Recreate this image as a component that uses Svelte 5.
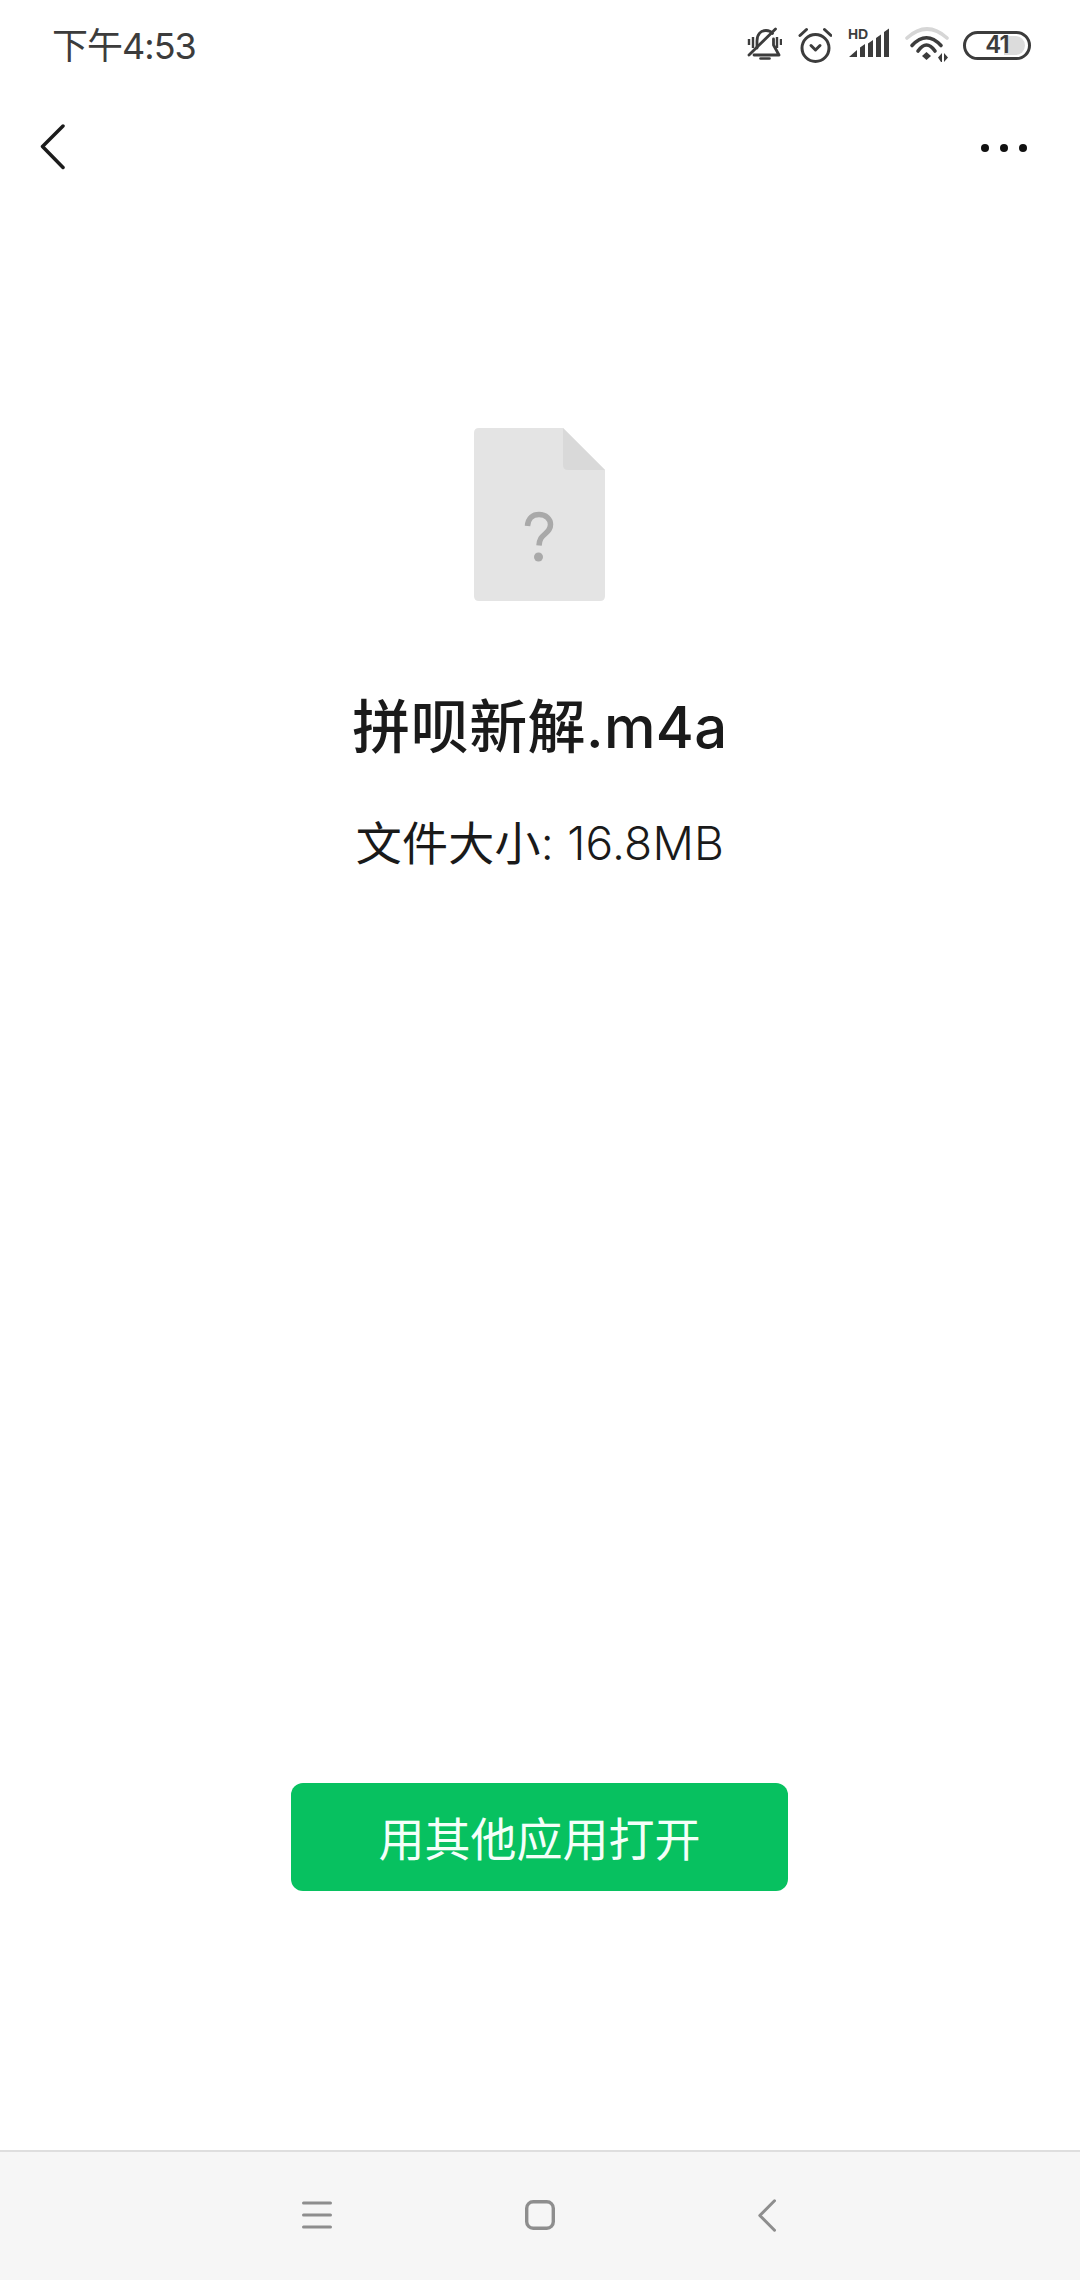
<div class="page">
  <header class="status">
    <span class="time">下午4:53</span>
    <div class="status-icons">
      <svg class="i-bell" width="36" height="36" viewBox="0 0 36 36" fill="none" stroke="#3c3c3c" stroke-width="2.800" stroke-linecap="round" stroke-linejoin="round">
        <path d="M11 21 V14 C11 7 15 3.500 20 3.500 C23 3.500 25 4.500 26.500 6.500 M27.500 12 V18 L33 28 H8" />
        <path d="M14.500 31.500 H23.500" stroke-width="2.600" />
        <path d="M29.500 2 L3 28" />
        <path d="M3 12 V18 M7 10 V21 M31 10 V21 M35 12 V18" stroke-width="2.400" stroke-linecap="butt" />
      </svg>
      <svg class="i-alarm" width="36" height="36" viewBox="0 0 36 36" fill="none" stroke="#3c3c3c" stroke-width="3" stroke-linecap="round" stroke-linejoin="round">
        <circle cx="19.500" cy="21" r="13.500" />
        <path d="M15 18.500 L19.500 23 L24 18.500" />
        <path d="M4 8.500 L10.500 2.500 M35 8.500 L28.500 2.500" />
      </svg>
      <svg class="i-signal" width="44" height="36" viewBox="0 0 44 36">
        <text class="hd" x="2" y="11.500">HD</text>
        <path fill="#3c3c3c" d="M3 30 L11 23 V30 Z M14 30 V20.500 L19 17 V30 Z M22 30 V16.500 L27 13 V30 Z M30 30 V11 L35 7.500 V30 Z M38 30 V5 L43 1.500 V30 Z" />
      </svg>
      <svg class="i-wifi" width="46" height="36" viewBox="0 0 46 36" fill="none" stroke-linecap="round">
        <path d="M3 11 Q23 -7 43 11" stroke="#d6d6d6" stroke-width="3.600" />
        <path d="M8 18.500 Q22.500 3 37 18.500" stroke="#3c3c3c" stroke-width="3.600" />
        <path d="M14 24 Q22.500 12 31 24" stroke="#3c3c3c" stroke-width="3.600" />
        <path d="M22.500 25 L27 29 L22.500 33 L18 29 Z" fill="#3c3c3c" />
        <path d="M34 30.500 L38 26 V35 H37 Z M40 26 V35 L44 30.500 Z" fill="#3c3c3c" />
      </svg>
      <div class="battery">
        <span class="fill"></span>
        <span class="level">41</span>
      </div>
    </div>
  </header>

  <nav class="topbar">
    <svg width="26" height="46" viewBox="0 0 26 46" fill="none" stroke="#1c1c1c" stroke-width="3.500" stroke-linecap="round" stroke-linejoin="round">
      <path d="M23 2 L2.500 22.500 L23 43.500" />
    </svg>
    <svg class="more" width="48" height="10" viewBox="0 0 48 10" fill="#111">
      <circle cx="5" cy="5" r="4" />
      <circle cx="24" cy="5" r="4" />
      <circle cx="43" cy="5" r="4" />
    </svg>
  </nav>

  <main class="content">
    <svg class="file" width="131" height="173" viewBox="0 0 131 173" fill="none">
      <path fill="#e4e4e4" d="M5 0 H89 L131 42 V168 Q131 173 126 173 H5 Q0 173 0 168 V5 Q0 0 5 0 Z" />
      <path fill="#d9d9d9" d="M89 0 L131 42 H94 Q89 42 89 37 Z" />
      <path stroke="#a9a9a9" stroke-width="5.500" d="M53.500 98 C54 90 59 86.500 65 86.500 C72 86.500 76.500 91 76.500 96.500 C76.500 101 74 103.500 71 106 C67.500 109 65.500 111 65 117.500" />
      <circle cx="64.500" cy="129" r="4.500" fill="#a9a9a9" />
    </svg>
    <h1>拼呗新解.m4a</h1>
    <p><span class="cjk">文件大小</span>: 16.8MB</p>
  </main>

  <div class="action">
    <button type="button">用其他应用打开</button>
  </div>

  <footer class="navbar">
    <svg class="nav-menu" width="30" height="30" viewBox="0 0 30 30" stroke="#8e8e8e" stroke-width="3" stroke-linecap="round">
      {#each [3, 15, 27] as y}
        <path d="M1.500 {y} H28.500" />
      {/each}
    </svg>
    <svg class="nav-home" width="30" height="30" viewBox="0 0 30 30" fill="none" stroke="#8e8e8e" stroke-width="3.400">
      <rect x="1.700" y="1.700" width="26.600" height="26.600" rx="6.500" />
    </svg>
    <svg class="nav-back" width="18" height="33" viewBox="0 0 18 33" fill="none" stroke="#8e8e8e" stroke-width="3" stroke-linecap="round" stroke-linejoin="round">
      <path d="M16.500 1.800 L1.800 16.500 L16.500 31.200" />
    </svg>
  </footer>
</div>

<style>
  :global(body) {
    margin: 0;
    background: #fff;
  }

  .page {
    width: 1080px;
    height: 2280px;
    display: flex;
    flex-direction: column;
    background: #fff;
    font-family: Inter, "Noto Sans CJK SC", sans-serif;
    color: #1a1a1a;
    overflow: hidden;
  }

  .status {
    height: 90px;
    flex: none;
    display: flex;
    align-items: center;
    justify-content: space-between;
    padding: 0 49px 0 52px;
  }

  .time {
    font-size: 36px;
    line-height: 44px;
    color: #3c3c3c;
    letter-spacing: -1px;
    padding-top: 2px;
  }

  .status-icons {
    display: flex;
    align-items: center;
  }

  .i-alarm,
  .i-signal,
  .i-wifi {
    margin-left: 14px;
  }

  .hd {
    font-family: "Liberation Sans", sans-serif;
    font-size: 14px;
    font-weight: 700;
    fill: #3c3c3c;
  }

  .battery {
    position: relative;
    width: 68px;
    height: 29px;
    margin-left: 13px;
    box-sizing: border-box;
    border: 3px solid #3c3c3c;
    border-radius: 15px;
    display: flex;
    align-items: center;
    justify-content: center;
    overflow: hidden;
  }

  .fill {
    position: absolute;
    top: 2px;
    bottom: 2px;
    left: 38px;
    right: 3px;
    border-radius: 0 10px 10px 0;
    background: #dcdcdc;
  }

  .level {
    position: relative;
    font-size: 24px;
    line-height: 24px;
    font-weight: 600;
    color: #3c3c3c;
    letter-spacing: -1px;
  }

  .topbar {
    height: 60px;
    flex: none;
    display: flex;
    align-items: center;
    justify-content: space-between;
    padding: 0 52px 0 40px;
    margin-top: 27px;
  }

  .more {
    margin-top: 2px;
  }

  .content {
    flex: 1;
    display: flex;
    flex-direction: column;
    align-items: center;
    padding-top: 251px;
  }

  .file {
    display: block;
    margin-right: 1px;
  }

  h1 {
    margin: 88px 0 0;
    font-size: 58px;
    line-height: 76px;
    font-weight: 500;
    letter-spacing: 0.4px;
    color: #1a1a1a;
  }

  p {
    margin: 50px 0 0;
    font-size: 46px;
    line-height: 56px;
    font-weight: 300;
    letter-spacing: 0.25px;
    color: #1a1a1a;
  }

  .cjk {
    font-weight: 400;
  }

  .action {
    flex: none;
    display: flex;
    justify-content: center;
    padding-bottom: 259px;
  }

  button {
    width: 497px;
    height: 108px;
    border: 0;
    border-radius: 12px;
    background: #07c160;
    color: #f4fff9;
    font: inherit;
    font-size: 46px;
    padding: 0 0 2px;
    margin-right: 1px;
  }

  .navbar {
    flex: none;
    height: 130px;
    box-sizing: border-box;
    border-top: 2px solid #dedede;
    background: #f6f6f6;
    display: flex;
    align-items: center;
    padding: 0 0 2px 302px;
  }

  .nav-home {
    margin-left: 193px;
  }

  .nav-back {
    margin-left: 203px;
  }
</style>
